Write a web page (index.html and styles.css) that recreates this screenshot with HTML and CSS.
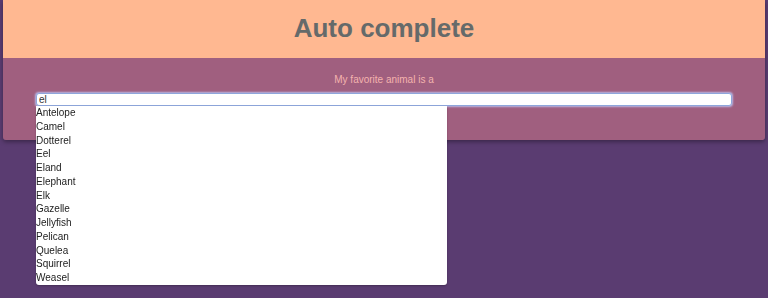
FILE: index.html
```html
<!DOCTYPE html>
<html lang="en">
<head>
  <meta charset="UTF-8">
  <meta name="viewport" content="width=device-width, initial-scale=1.0">
  <title>Auto complete</title>
  <link rel="stylesheet" href="styles.css">
</head>
<body>
  <div class="card">
    <header class="card-header">
      <h1>Auto complete</h1>
    </header>

    <div class="card-body">
      <label for="animal" class="label">My favorite animal is a</label>
      <div class="field">
        <input type="text" id="animal" class="search-input" value="el" autocomplete="off" autofocus />
        <ul class="suggestions" id="suggestions"></ul>
      </div>
    </div>
  </div>

  <script>
    const animals = [
      'Antelope', 'Camel', 'Dotterel', 'Eel', 'Eland', 'Elephant', 'Elk',
      'Gazelle', 'Jellyfish', 'Pelican', 'Quelea', 'Squirrel', 'Weasel'
    ];

    const input = document.getElementById('animal');
    const list = document.getElementById('suggestions');

    function showSuggestions() {
      const term = input.value.trim().toLowerCase();
      list.innerHTML = '';
      if (term === '') {
        list.style.display = 'none';
        return;
      }
      animals
        .filter(function (name) { return name.toLowerCase().includes(term); })
        .forEach(function (name) {
          const item = document.createElement('li');
          item.textContent = name;
          item.addEventListener('mousedown', function () {
            input.value = name;
            list.style.display = 'none';
          });
          list.appendChild(item);
        });
      list.style.display = list.children.length ? 'block' : 'none';
    }

    input.addEventListener('input', showSuggestions);
    showSuggestions();
    input.focus();
    input.setSelectionRange(2, 2);
  </script>
</body>
</html>
```

FILE: styles.css
```css
/* General Styling */
body {
  margin: 0;
  padding: 0;
  min-height: 100vh;
  background: #5a3c71;
  font-family: 'Liberation Sans', Arial, sans-serif;
}

.card {
  margin: 0 3px;
  box-shadow: 0 2px 4px rgba(0, 0, 0, 0.35);
  border-radius: 0 0 3px 3px;
}

.card-header {
  height: 58px;
  display: flex;
  align-items: center;
  justify-content: center;
  background: #ffb891;
}

h1 {
  margin: 0;
  font-size: 26px;
  font-weight: bold;
  color: #656a6a;
  padding-bottom: 1px;
}

.card-body {
  background: #a05f7f;
  padding: 16px 33px 34px 33px;
  border-radius: 0 0 3px 3px;
  display: flex;
  flex-direction: column;
}

.label {
  text-align: center;
  font-size: 10px;
  line-height: 12px;
  color: #f4b3ae;
  margin-bottom: 7px;
}

.field {
  position: relative;
}

.search-input {
  display: block;
  box-sizing: border-box;
  width: 100%;
  height: 13px;
  margin: 0;
  padding: 0 2px;
  border: 1px solid #8ea6dc;
  border-radius: 3px;
  background: #ffffff;
  font-family: 'Liberation Sans', Arial, sans-serif;
  font-size: 10px;
  color: #333;
  outline: none;
  box-shadow: 0 0 2px 1px rgba(190, 205, 255, 0.8);
}

.suggestions {
  position: absolute;
  top: 13px;
  left: 0;
  width: 411px;
  margin: 0;
  padding: 0;
  list-style-type: none;
  background: #ffffff;
  border-radius: 0 0 3px 3px;
  box-shadow: 0 1px 2px rgba(0, 0, 0, 0.25);
  z-index: 10;
}

.suggestions li {
  font-size: 10px;
  line-height: 13.75px;
  height: 13.75px;
  color: #222;
  cursor: pointer;
}

.suggestions li:hover {
  background: #eef1fb;
}
```
